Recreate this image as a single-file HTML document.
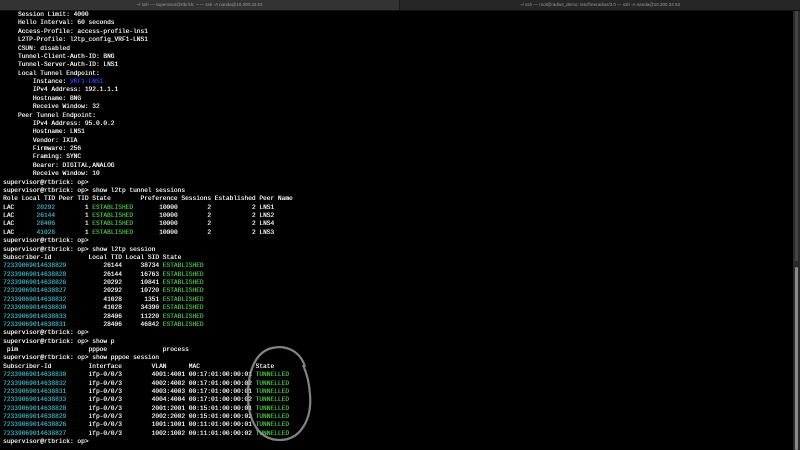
<!DOCTYPE html>
<html><head><meta charset="utf-8"><style>
html,body{margin:0;padding:0;background:#000;width:800px;height:450px;overflow:hidden;position:relative}
.bar{position:absolute;left:0;top:0;width:800px;height:10px;background:#2b2b2b;border-bottom:1px solid #111}
.tab{position:absolute;top:0;height:10px;font:4.5px "Liberation Sans",sans-serif;color:#9a9a9a;text-align:center;line-height:10px}
.t1{left:0;width:399px;background:#333;border-right:1px solid #1a1a1a}
.t2{left:400px;width:400px;background:#262626}
pre{position:absolute;left:3px;top:11px;margin:0;font:6.2px/8.37px "Liberation Mono",monospace;color:#f0f0f0;white-space:pre;text-shadow:0.25px 0 0 currentColor}
.c{color:#3aa9b8}.g{color:#45b845}.b{color:#3a3af0}
.sb{position:absolute;left:793px;top:11px;width:7px;height:439px;background:#2a2a2a}
.th{position:absolute;left:795px;top:267px;width:3px;height:183px;background:#8a8a8a;border-radius:2px}
.th0{position:absolute;left:795px;top:11px;width:3px;height:250px;background:#444}
</style></head><body>
<div class="bar"><div class="tab t1">~/ ssh — supervisor@rtbrick: ~ — ssh -A nanda@10.200.32.53</div><div class="tab t2">~/ ssh — root@radius_demo: /etc/freeradius/3.0 — ssh -A nanda@10.200.32.53</div></div>
<pre>    Session Limit: 4000
    Hello Interval: 60 seconds
    Access-Profile: access-profile-lns1
    L2TP-Profile: l2tp_config_VRF1-LNS1
    CSUN: disabled
    Tunnel-Client-Auth-ID: BNG
    Tunnel-Server-Auth-ID: LNS1
    Local Tunnel Endpoint:
        Instance: <span class="b">VRF1-LNS1</span>
        IPv4 Address: 192.1.1.1
        Hostname: BNG
        Receive Window: 32
    Peer Tunnel Endpoint:
        IPv4 Address: 95.0.0.2
        Hostname: LNS1
        Vendor: IXIA
        Firmware: 256
        Framing: SYNC
        Bearer: DIGITAL,ANALOG
        Receive Window: 10
supervisor@rtbrick: op>
supervisor@rtbrick: op> show l2tp tunnel sessions
Role Local TID Peer TID State        Preference Sessions Established Peer Name
LAC      <span class="c">20292</span>        1 <span class="g">ESTABLISHED</span>       10000        2           2 LNS1
LAC      <span class="c">26144</span>        1 <span class="g">ESTABLISHED</span>       10000        2           2 LNS2
LAC      <span class="c">28406</span>        1 <span class="g">ESTABLISHED</span>       10000        2           2 LNS4
LAC      <span class="c">41028</span>        1 <span class="g">ESTABLISHED</span>       10000        2           2 LNS3
supervisor@rtbrick: op>
supervisor@rtbrick: op> show l2tp session
Subscriber-Id          Local TID Local SID State
<span class="c">72339069014638829</span>          26144     38734 <span class="g">ESTABLISHED</span>
<span class="c">72339069014638828</span>          26144     16763 <span class="g">ESTABLISHED</span>
<span class="c">72339069014638826</span>          20292     10841 <span class="g">ESTABLISHED</span>
<span class="c">72339069014638827</span>          20292     10720 <span class="g">ESTABLISHED</span>
<span class="c">72339069014638832</span>          41028      1351 <span class="g">ESTABLISHED</span>
<span class="c">72339069014638830</span>          41028     34390 <span class="g">ESTABLISHED</span>
<span class="c">72339069014638833</span>          28406     11220 <span class="g">ESTABLISHED</span>
<span class="c">72339069014638831</span>          28406     46842 <span class="g">ESTABLISHED</span>
supervisor@rtbrick: op>
supervisor@rtbrick: op> show p
 pim                   pppoe               process
supervisor@rtbrick: op> show pppoe session
Subscriber-Id          Interface        VLAN      MAC               State
<span class="c">72339069014638830</span>      ifp-0/0/3        4001:4001 00:17:01:00:00:01 <span class="g">TUNNELLED</span>
<span class="c">72339069014638832</span>      ifp-0/0/3        4002:4002 00:17:01:00:00:02 <span class="g">TUNNELLED</span>
<span class="c">72339069014638831</span>      ifp-0/0/3        4003:4003 00:17:01:00:00:01 <span class="g">TUNNELLED</span>
<span class="c">72339069014638833</span>      ifp-0/0/3        4004:4004 00:17:01:00:00:02 <span class="g">TUNNELLED</span>
<span class="c">72339069014638828</span>      ifp-0/0/3        2001:2001 00:15:01:00:00:01 <span class="g">TUNNELLED</span>
<span class="c">72339069014638829</span>      ifp-0/0/3        2002:2002 00:15:01:00:00:02 <span class="g">TUNNELLED</span>
<span class="c">72339069014638826</span>      ifp-0/0/3        1001:1001 00:11:01:00:00:01 <span class="g">TUNNELLED</span>
<span class="c">72339069014638827</span>      ifp-0/0/3        1002:1002 00:11:01:00:00:02 <span class="g">TUNNELLED</span>
supervisor@rtbrick: op></pre>
<svg style="position:absolute;left:0;top:0" width="800" height="450"><path d="M305 367 C300 350 285 345 272 348 C255 352 248 372 248 395 C248 420 258 440 280 440 C300 440 312 420 310 395 C309 380 306 372 303 365" fill="none" stroke="#9a9a9a" stroke-width="2.2" opacity="0.85"/></svg>
<div class="sb"></div><div class="th0"></div><div class="th"></div>
</body></html>
